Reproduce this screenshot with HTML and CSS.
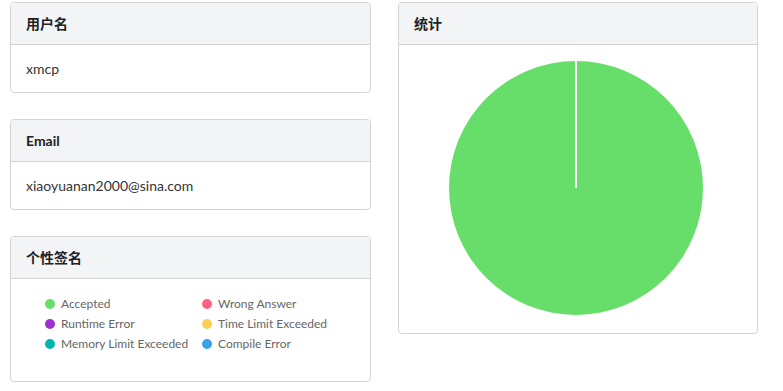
FILE: index.html
```html
<!DOCTYPE html>
<html lang="zh-CN">
<head>
  <meta charset="UTF-8">
  <meta name="viewport" content="width=device-width, initial-scale=1.0">
  <title>用户信息</title>
  <link rel="stylesheet" href="styles.css">
</head>
<body>
  <div class="profile-grid">
    <div class="left-column">
      <div class="card">
        <div class="card-header">用户名</div>
        <div class="card-body">xmcp</div>
      </div>

      <div class="card">
        <div class="card-header">Email</div>
        <div class="card-body">xiaoyuanan2000@sina.com</div>
      </div>

      <div class="card">
        <div class="card-header">个性签名</div>
        <div class="card-body legend-body">
          <ul class="legend">
            <li><span class="dot ac"></span>Accepted</li>
            <li><span class="dot wa"></span>Wrong Answer</li>
            <li><span class="dot re"></span>Runtime Error</li>
            <li><span class="dot tle"></span>Time Limit Exceeded</li>
            <li><span class="dot mle"></span>Memory Limit Exceeded</li>
            <li><span class="dot ce"></span>Compile Error</li>
          </ul>
        </div>
      </div>
    </div>

    <div class="right-column">
      <div class="card">
        <div class="card-header">统计</div>
        <div class="card-body chart-body">
          <!-- 饼图：全部为 Accepted -->
          <svg class="pie" width="256" height="256" viewBox="0 0 256 256">
            <circle cx="128" cy="128" r="127" fill="#68de6a"></circle>
            <line x1="128" y1="0" x2="128" y2="128" stroke="#fff" stroke-width="2"></line>
          </svg>
        </div>
      </div>
    </div>
  </div>
</body>
</html>
```

FILE: styles.css
```css
body {
  margin: 0;
  padding: 2px 25px 0 10px;
  font-family: Lato, "Noto Sans CJK SC", sans-serif;
  font-size: 14px;
  color: rgba(0, 0, 0, 0.87);
  background: #fff;
}

.profile-grid {
  display: grid;
  grid-template-columns: 361px 360px;
  column-gap: 27px;
  align-items: start;
}

.left-column {
  display: flex;
  flex-direction: column;
  gap: 26px;
}

.card {
  border: 1px solid #d4d4d5;
  border-radius: 4px;
  background: #fff;
  overflow: hidden;
}

.card-header {
  height: 41px;
  line-height: 41px;
  padding: 0 15px;
  background: #f3f4f5;
  border-bottom: 1px solid #d4d4d5;
  font-weight: bold;
  font-size: 14px;
  color: #222;
}

.card-body {
  padding: 14px 15px 13px;
  line-height: 20px;
  color: #333;
}

.legend-body {
  padding: 15px 15px 27px 34px;
}

.legend {
  list-style: none;
  margin: 0;
  padding: 0;
  display: grid;
  grid-template-columns: 157px 1fr;
  row-gap: 0;
}

.legend li {
  display: flex;
  align-items: center;
  height: 20px;
  font-size: 12px;
  color: #666;
}

.dot {
  width: 10px;
  height: 10px;
  border-radius: 50%;
  margin-right: 6px;
  flex-shrink: 0;
}

.ac { background: #68de6a; }
.wa { background: #ff6384; }
.re { background: #9b30d0; }
.tle { background: #ffce56; }
.mle { background: #00b5ad; }
.ce { background: #36a2eb; }

.chart-body {
  display: flex;
  justify-content: center;
  padding: 15px 4px 17px 0;
}

.pie {
  display: block;
}
```
